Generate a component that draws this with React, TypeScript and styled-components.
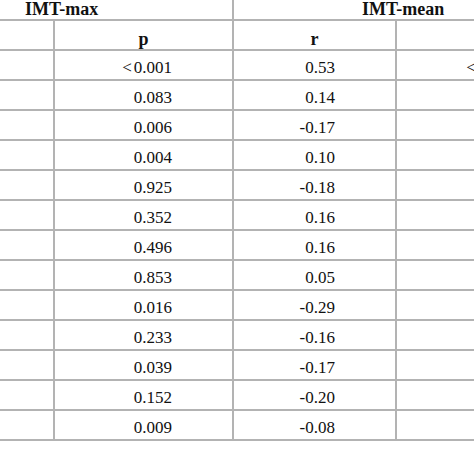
import React from "react";
import styled, { createGlobalStyle } from "styled-components";

const Global = createGlobalStyle`
  html, body { margin: 0; padding: 0; background: #ffffff; }
  body { width: 474px; height: 474px; overflow: hidden; }
`;

const Frame = styled.div`
  width: 474px;
  height: 474px;
  overflow: hidden;
  background: #ffffff;
  font-family: "Liberation Serif", "Times New Roman", serif;
  color: #111111;
`;

const Grid = styled.div`
  display: grid;
  grid-template-columns: 55px 179px 163px 179px;
  width: 576px;
`;

const Cell = styled.div<{ $last?: boolean }>`
  box-sizing: border-box;
  height: 30px;
  border-bottom: 2px solid #b3b3b3;
  border-right: ${(p) => (p.$last ? "none" : "2px solid #b3b3b3")};
`;

const GroupHead = styled.div<{ $span: number; $pad: number; $last?: boolean }>`
  box-sizing: border-box;
  grid-column: span ${(p) => p.$span};
  height: 21px;
  border-bottom: 2px solid #b3b3b3;
  border-right: ${(p) => (p.$last ? "none" : "2px solid #b3b3b3")};
  padding-left: ${(p) => p.$pad}px;
  font-weight: bold;
  font-size: 18px;
  line-height: 18px;
  white-space: nowrap;
`;

const HeadCell = styled(Cell)`
  font-weight: bold;
  font-size: 18px;
  line-height: 22px;
  padding-top: 7px;
  text-align: center;
`;

const ValueCell = styled(Cell)`
  font-size: 17px;
  line-height: 22px;
  padding-top: 6px;
  padding-right: 60px;
  text-align: right;
  white-space: nowrap;
`;

const Lt = styled.span`
  margin-right: 2px;
`;

const rows: [string, string, string][] = [
  ["<0.001", "0.53", "<0.001"],
  ["0.083", "0.14", "0.074"],
  ["0.006", "-0.17", "0.021"],
  ["0.004", "0.10", "0.012"],
  ["0.925", "-0.18", "0.874"],
  ["0.352", "0.16", "0.280"],
  ["0.496", "0.16", "0.311"],
  ["0.853", "0.05", "0.640"],
  ["0.016", "-0.29", "0.005"],
  ["0.233", "-0.16", "0.180"],
  ["0.039", "-0.17", "0.046"],
  ["0.152", "-0.20", "0.094"],
  ["0.009", "-0.08", "0.257"],
];

function Value({ v }: { v: string }) {
  if (v.startsWith("<")) {
    return (
      <>
        <Lt>&lt;</Lt>
        {v.slice(1)}
      </>
    );
  }
  return <>{v}</>;
}

export default function App() {
  return (
    <>
      <Global />
      <Frame>
        <Grid>
          <GroupHead $span={2} $pad={25}>IMT-max</GroupHead>
          <GroupHead $span={2} $pad={128} $last>IMT-mean</GroupHead>

          <Cell />
          <HeadCell>p</HeadCell>
          <HeadCell>r</HeadCell>
          <HeadCell $last>p</HeadCell>

          {rows.map(([p1, r, p2], i) => (
            <React.Fragment key={i}>
              <Cell />
              <ValueCell><Value v={p1} /></ValueCell>
              <ValueCell>{r}</ValueCell>
              <ValueCell $last><Value v={p2} /></ValueCell>
            </React.Fragment>
          ))}
        </Grid>
      </Frame>
    </>
  );
}
